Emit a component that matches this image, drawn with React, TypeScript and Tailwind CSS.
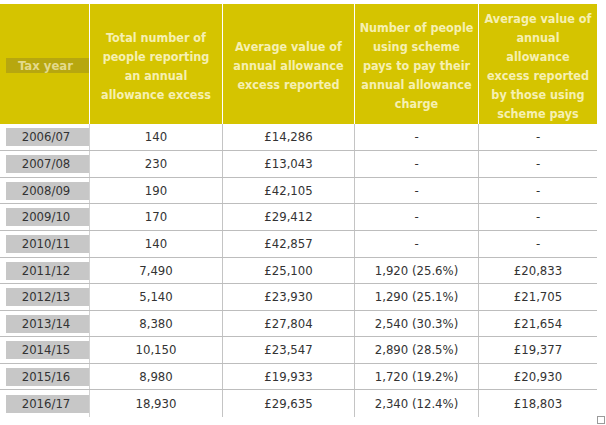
import React from "react";

const ROWS = [
  ["2006/07", "140", "£14,286", "-", "-"],
  ["2007/08", "230", "£13,043", "-", "-"],
  ["2008/09", "190", "£42,105", "-", "-"],
  ["2009/10", "170", "£29,412", "-", "-"],
  ["2010/11", "140", "£42,857", "-", "-"],
  ["2011/12", "7,490", "£25,100", "1,920 (25.6%)", "£20,833"],
  ["2012/13", "5,140", "£23,930", "1,290 (25.1%)", "£21,705"],
  ["2013/14", "8,380", "£27,804", "2,540 (30.3%)", "£21,654"],
  ["2014/15", "10,150", "£23,547", "2,890 (28.5%)", "£19,377"],
  ["2015/16", "8,980", "£19,933", "1,720 (19.2%)", "£20,930"],
  ["2016/17", "18,930", "£29,635", "2,340 (12.4%)", "£18,803"],
];

// row heights so the grid lines land where the sheet has them
const ROW_H = [
  "h-[27px]", "h-[27px]", "h-[26px]", "h-[27px]", "h-[27px]", "h-[26px]",
  "h-[27px]", "h-[26px]", "h-[27px]", "h-[26px]", "h-[27px]",
];

const WIDTHS = ["w-[90px]", "w-[133px]", "w-[132px]", "w-[124px]", "w-[118px]"];

const HEADERS: string[][] = [
  ["Total number of", "people reporting", "an annual", "allowance excess"],
  ["Average value of", "annual allowance", "excess reported"],
  ["Number of people", "using scheme", "pays to pay their", "annual allowance", "charge"],
  ["Average value of", "annual", "allowance", "excess reported", "by those using", "scheme pays"],
];

export default function App() {
  return (
    <div
      className="relative h-[425px] w-[606px] overflow-hidden bg-white pt-[4px] text-[13px] text-[#333]"
      style={{ fontFamily: '"DejaVu Sans Condensed", "DejaVu Sans", sans-serif' }}
    >
      <div className="w-[597px]">
        {/* header */}
        <div className="flex h-[120px] bg-[#d5c400] text-[12.5px] font-bold leading-[19px] text-[#f6f0b2]">
          <div className="flex w-[90px] items-center border-r border-white">
            <div className="ml-[6px] mt-[3px] flex h-[15px] w-[83px] items-center bg-[#b7a70f] pl-[12px] text-[13px] text-[#e3da8c]">
              Tax year
            </div>
          </div>
          {HEADERS.map((lines, i) => (
            <div
              key={i}
              className={`flex items-center justify-center pt-[3px] text-center ${WIDTHS[i + 1]} ${
                i < 3 ? "border-r border-white" : ""
              }`}
            >
              <div>
                {lines.map((l) => (
                  <div key={l} className="whitespace-nowrap">
                    {l}
                  </div>
                ))}
              </div>
            </div>
          ))}
        </div>

        {/* body */}
        {ROWS.map((r, ri) => (
          <div
            key={r[0]}
            className={`flex ${ROW_H[ri]} ${ri < ROWS.length - 1 ? "border-b border-[#bdbdbd]" : ""}`}
          >
            <div className="flex w-[90px] items-center border-r border-[#d2d2d2]">
              <div className="ml-[6px] flex h-[18px] w-[83px] items-center justify-center bg-[#c7c7c7] pr-[3px]">
                {r[0]}
              </div>
            </div>
            {r.slice(1).map((v, ci) => (
              <div
                key={ci}
                className={`flex items-center justify-center ${WIDTHS[ci + 1]} ${
                  ci < 3 ? "border-r border-[#c4c4c4]" : ""
                }`}
              >
                {v}
              </div>
            ))}
          </div>
        ))}
      </div>

      {/* sheet resize handle */}
      <div className="absolute left-[597px] top-[416px] h-[8px] w-[8px] border border-[#9a9a9a] bg-white" />
    </div>
  );
}
